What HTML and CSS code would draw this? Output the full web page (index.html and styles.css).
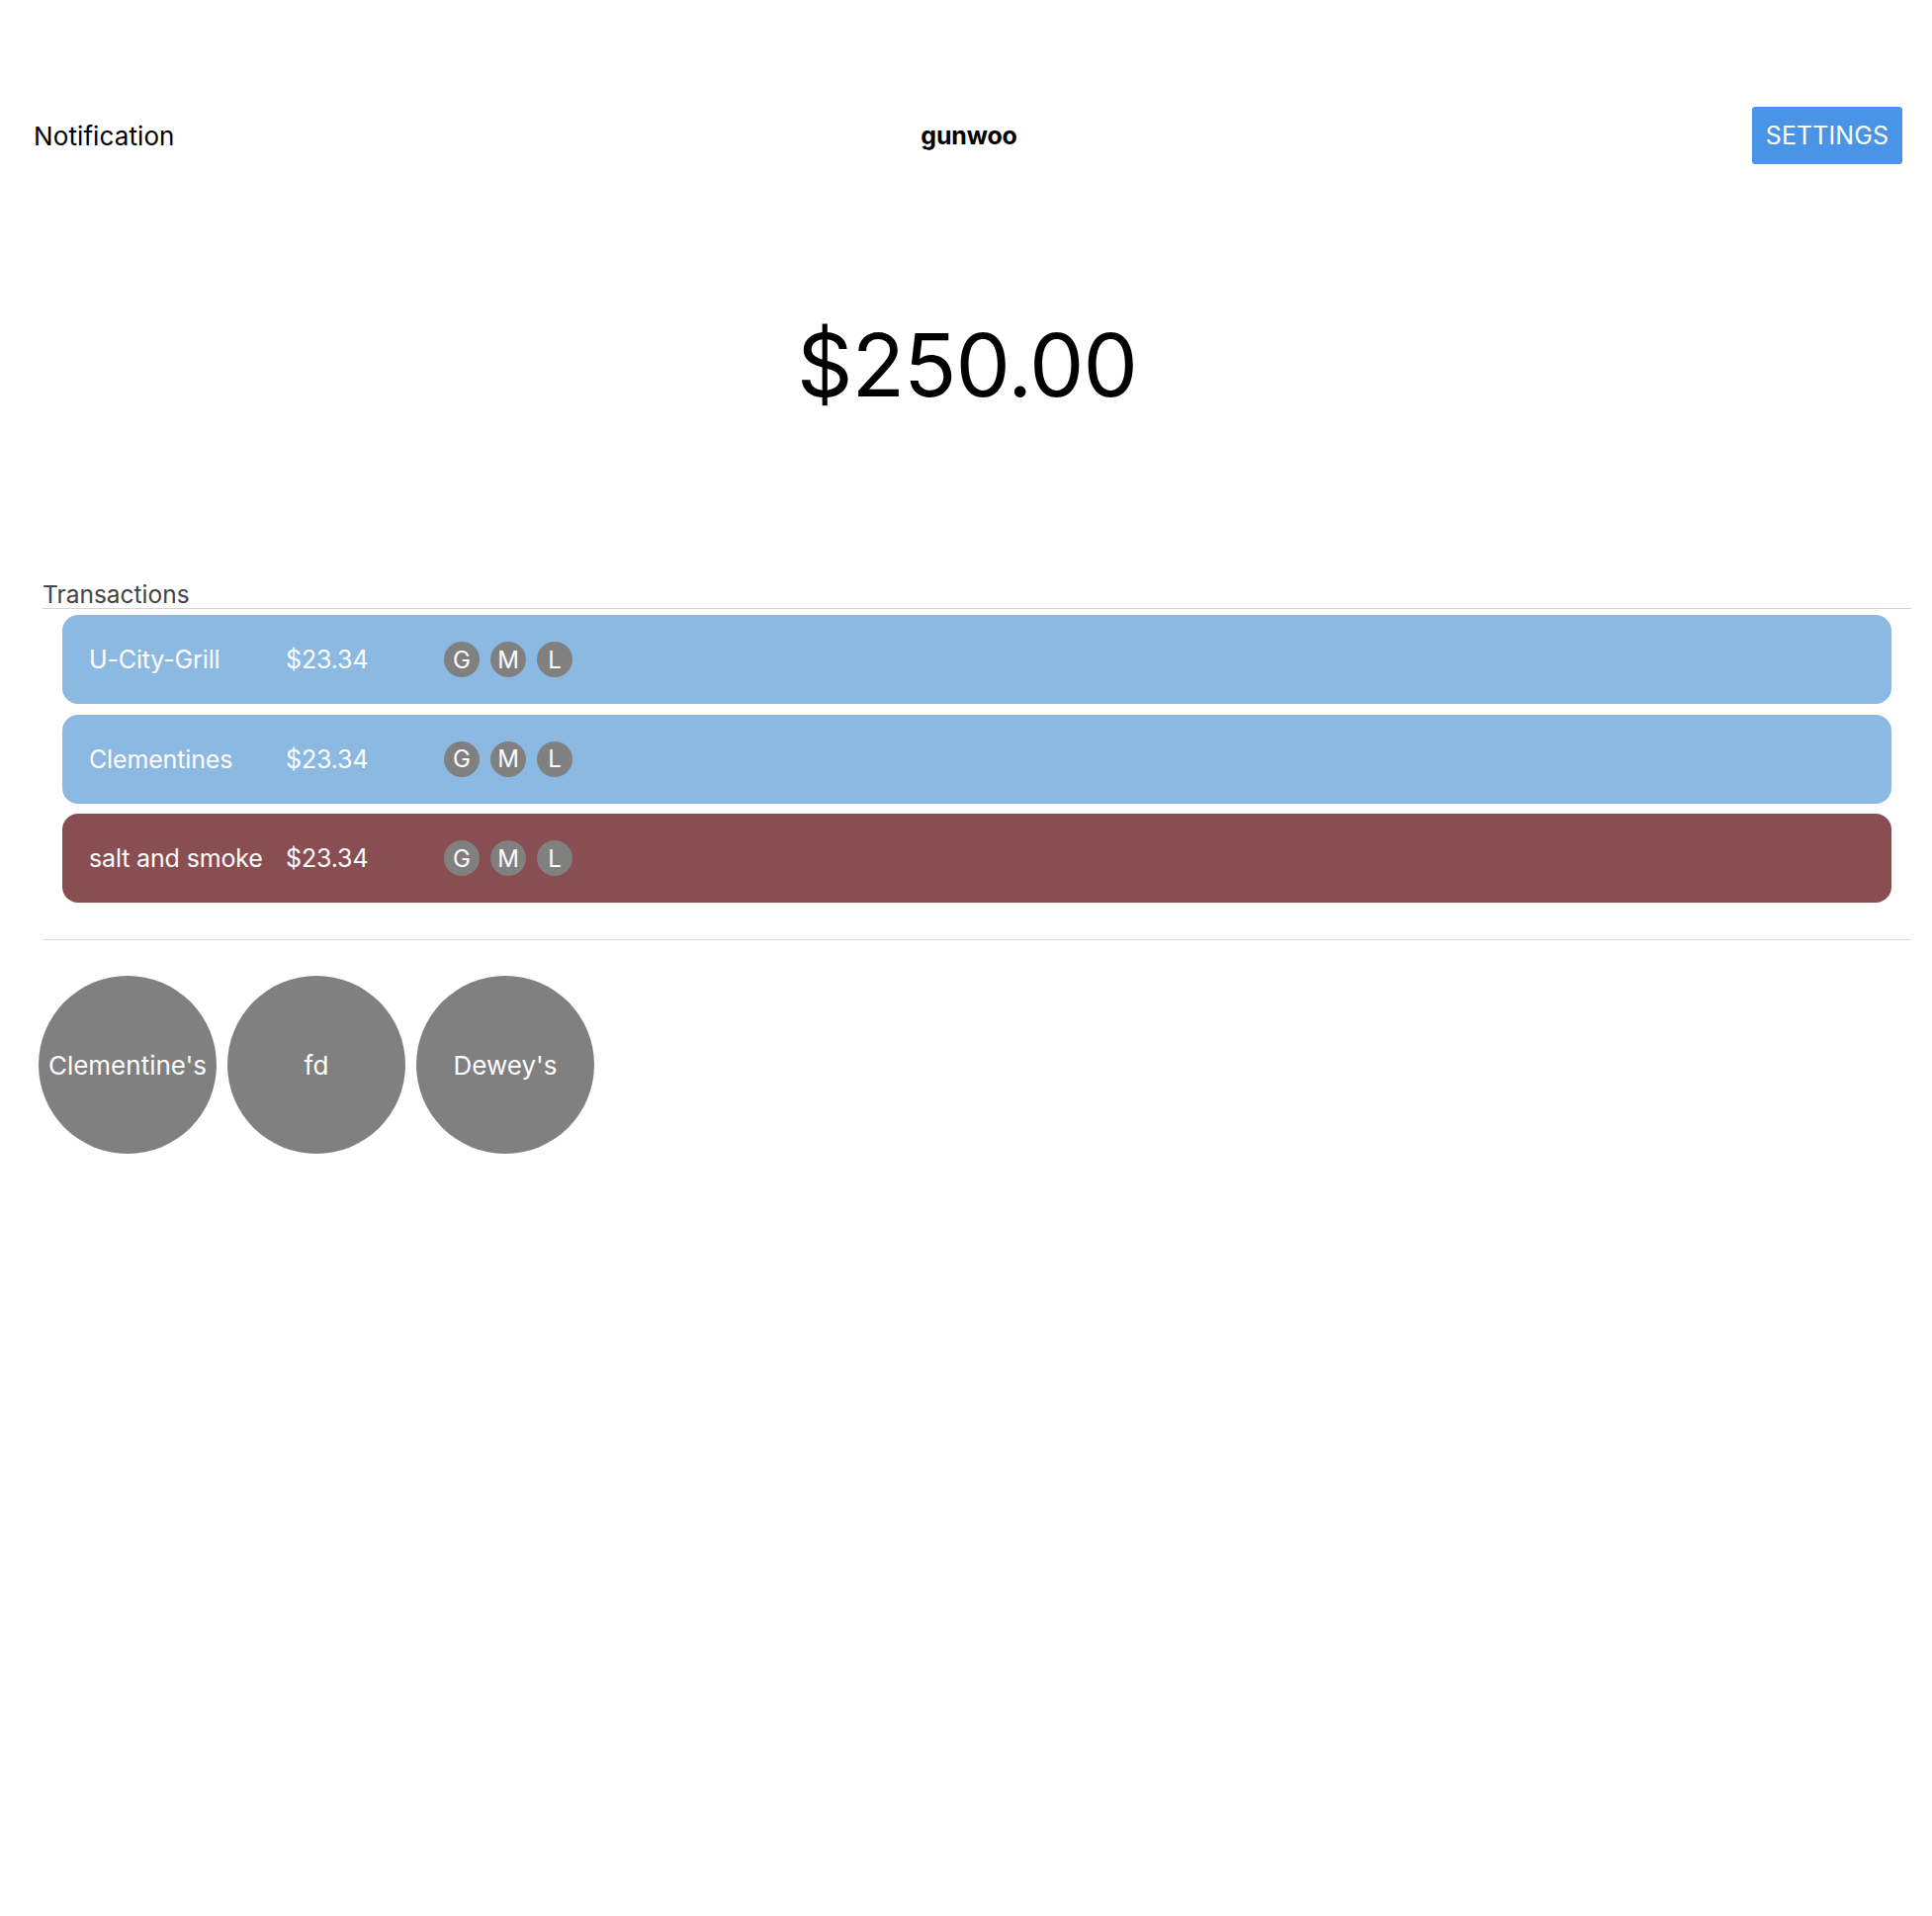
FILE: index.html
```html
<!DOCTYPE html>
<html>
<head>
<meta charset="utf-8">
<link rel="stylesheet" href="styles.css">
</head>
<body>
<header class="topbar">
  <div class="notif">Notification</div>
  <div class="title">gunwoo</div>
  <div class="right"><button class="settings">SETTINGS</button></div>
</header>
<div class="balance">$250.00</div>
<section class="tx">
  <div class="tx-label">Transactions</div>
  <div class="tx-list">
    <div class="row blue">
      <span class="name">U-City-Grill</span><span class="amt">$23.34</span>
      <span class="avatars"><span class="av">G</span><span class="av">M</span><span class="av">L</span></span>
    </div>
    <div class="row blue">
      <span class="name">Clementines</span><span class="amt">$23.34</span>
      <span class="avatars"><span class="av">G</span><span class="av">M</span><span class="av">L</span></span>
    </div>
    <div class="row red">
      <span class="name">salt and smoke</span><span class="amt">$23.34</span>
      <span class="avatars"><span class="av">G</span><span class="av">M</span><span class="av">L</span></span>
    </div>
  </div>
</section>
<div class="places">
  <div class="place">Clementine's</div>
  <div class="place">fd</div>
  <div class="place">Dewey's</div>
</div>
</body>
</html>
```
FILE: styles.css
```css
html, body {
  margin: 0;
  padding: 0;
  background: #ffffff;
}
body {
  font-family: Inter, "Noto Sans", sans-serif;
  color: #000;
}
.topbar {
  display: grid;
  grid-template-columns: 1fr auto 1fr;
  align-items: center;
  padding: 108px 30px 0 34px;
  height: 58px;
}
.notif {
  font-size: 26px;
  letter-spacing: 0.1px;
}
.title {
  font-size: 25px;
  font-weight: 700;
  letter-spacing: -0.2px;
  padding-left: 2px;
}
.right {
  display: flex;
  justify-content: flex-end;
}
.settings {
  font-family: Inter, "Noto Sans", sans-serif;
  background: #4a94e8;
  color: #fff;
  border: none;
  border-radius: 3px;
  width: 152px;
  height: 58px;
  font-size: 25px;
  padding: 0;
  letter-spacing: 0.1px;
}
.balance {
  margin-top: 159px;
  text-align: center;
  font-size: 88px;
  line-height: 88px;
  letter-spacing: -1px;
  padding-left: 2px;
}
.tx {
  margin: 174px 21px 0 43px;
  padding-bottom: 37px;
  border-bottom: 1.5px solid #d8d8d8;
}
.tx-label {
  font-size: 24.5px;
  line-height: 28px;
  color: #444;
  border-bottom: 1.5px solid #d4d4d4;
}
.tx-list {
  display: flex;
  flex-direction: column;
  gap: 10.5px;
  padding: 6px 20px 0 20px;
}
.row {
  height: 90px;
  border-radius: 16px;
  display: flex;
  align-items: center;
  padding-left: 27px;
  color: #fff;
  font-size: 25px;
  letter-spacing: -0.15px;
}
.row.blue { background: #8cb9e2; }
.row.red { background: #894e52; }
.name {
  width: 199px;
  white-space: nowrap;
}
.amt {
  width: 160px;
}
.avatars {
  display: flex;
  gap: 11px;
}
.av {
  width: 36px;
  height: 36px;
  border-radius: 50%;
  background: #808080;
  color: #fff;
  font-size: 24px;
  letter-spacing: 0;
  display: flex;
  align-items: center;
  justify-content: center;
}
.places {
  display: flex;
  gap: 11px;
  padding: 36px 0 0 39px;
}
.place {
  width: 180px;
  height: 180px;
  border-radius: 50%;
  background: #808080;
  color: #fff;
  font-size: 26px;
  display: flex;
  align-items: center;
  justify-content: center;
  white-space: nowrap;
}
```
